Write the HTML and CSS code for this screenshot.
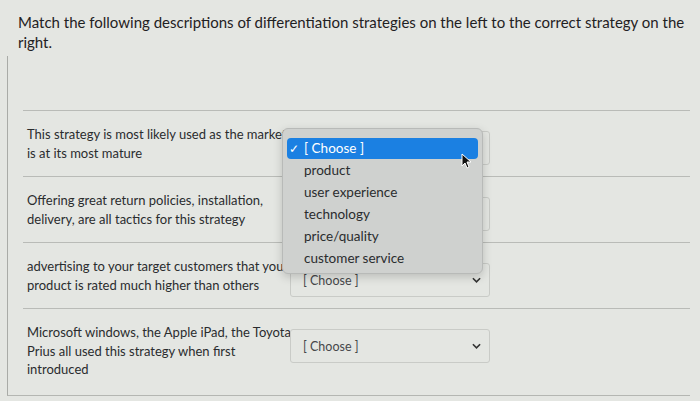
FILE: index.html
```html
<!DOCTYPE html>
<html>
<head>
<meta charset="utf-8">
<link rel="stylesheet" href="styles.css">
</head>
<body>
<p class="question">Match the following descriptions of differentiation strategies on the left to the correct strategy on the right.</p>
<div class="answers">
  <div class="row">
    <div class="desc">This strategy is most likely used as the market is at its most mature</div>
    <div class="pick">
      <div class="select covered"><span>[ Choose ]</span><svg class="chev" viewBox="0 0 10 6"><path d="M1 1l4 4 4-4" fill="none" stroke="#333" stroke-width="1.8"/></svg></div>
      <ul class="menu">
        <li class="on"><span class="tick">✓</span>[ Choose ]</li>
        <li>product</li>
        <li>user experience</li>
        <li>technology</li>
        <li>price/quality</li>
        <li>customer service</li>
      </ul>
      <svg class="cursor" viewBox="0 0 10 16"><path d="M1 1v12l3-3 2 5 2-1-2-5h4z" fill="#111" stroke="#fff" stroke-width="1"/></svg>
    </div>
  </div>
  <div class="row">
    <div class="desc">Offering great return policies, installation, delivery, are all tactics for this strategy</div>
    <div class="pick"><div class="select covered"><span>[ Choose ]</span><svg class="chev" viewBox="0 0 10 6"><path d="M1 1l4 4 4-4" fill="none" stroke="#333" stroke-width="1.8"/></svg></div></div>
  </div>
  <div class="row">
    <div class="desc">advertising to your target customers that your product is rated much higher than others</div>
    <div class="pick"><div class="select"><span>[ Choose ]</span><svg class="chev" viewBox="0 0 10 6"><path d="M1 1l4 4 4-4" fill="none" stroke="#333" stroke-width="1.8"/></svg></div></div>
  </div>
  <div class="row last">
    <div class="desc">Microsoft windows, the Apple iPad, the Toyota Prius all used this strategy when first introduced</div>
    <div class="pick"><div class="select"><span>[ Choose ]</span><svg class="chev" viewBox="0 0 10 6"><path d="M1 1l4 4 4-4" fill="none" stroke="#333" stroke-width="1.8"/></svg></div></div>
  </div>
</div>
</body>
</html>
```
FILE: styles.css
```css
html, body {
  margin: 0;
  padding: 0;
  background: #e4e6e2;
  font-family: Lato, "Liberation Sans", sans-serif;
  color: #2b2d2f;
}
.question {
  margin: 0;
  padding: 12px 10px 0 18px;
  font-size: 15px;
  line-height: 20px;
  color: #1f2123;
  height: 44px;
}
.answers {
  margin-left: 7px;
  margin-right: 10px;
  border-left: 1px solid #a9aba7;
  border-bottom: 1px solid #b4b6b2;
  padding: 54px 0 0 15px;
  height: 285px;
}
.row {
  display: grid;
  grid-template-columns: 263px 200px;
  border-top: 1px solid #b9bbb7;
  height: 66px;
  box-sizing: border-box;
  padding: 14px 0 0 4px;
}
.row.last { height: 89px; }
.desc {
  font-size: 13px;
  line-height: 18.5px;
  color: #2a2c2e;
  margin-right: -8px;
}
.pick {
  position: relative;
  padding-top: 6px;
}
.select {
  box-sizing: border-box;
  height: 34px;
  border: 1px solid #c9cbc7;
  border-radius: 3px;
  display: flex;
  align-items: center;
  justify-content: space-between;
  padding: 0 8px 0 12px;
  font-size: 12.5px;
  color: #46484a;
  background: #e4e6e2;
}
.select.covered span { visibility: hidden; }
.chev { width: 9px; height: 6px; }
.menu {
  position: absolute;
  z-index: 5;
  left: -8px;
  top: 3px;
  width: 201px;
  box-sizing: border-box;
  margin: 0;
  padding: 9px 4px 4px;
  list-style: none;
  background: #cfd1cf;
  border: 1px solid #b8bab8;
  border-radius: 6px;
  box-shadow: 0 3px 10px rgba(0,0,0,0.18);
  font-size: 13.5px;
  color: #2a2c2e;
}
.menu li {
  height: 22px;
  line-height: 22px;
  padding-left: 17px;
}
.menu li.on {
  height: 21px;
  line-height: 21px;
  background: #1b80e2;
  color: #fff;
  border-radius: 4px;
  padding-left: 2px;
}
.tick { display: inline-block; width: 15px; font-size: 12px; }
.cursor {
  position: absolute;
  z-index: 6;
  left: 171px;
  top: 28px;
  width: 10px;
  height: 16px;
}
```
